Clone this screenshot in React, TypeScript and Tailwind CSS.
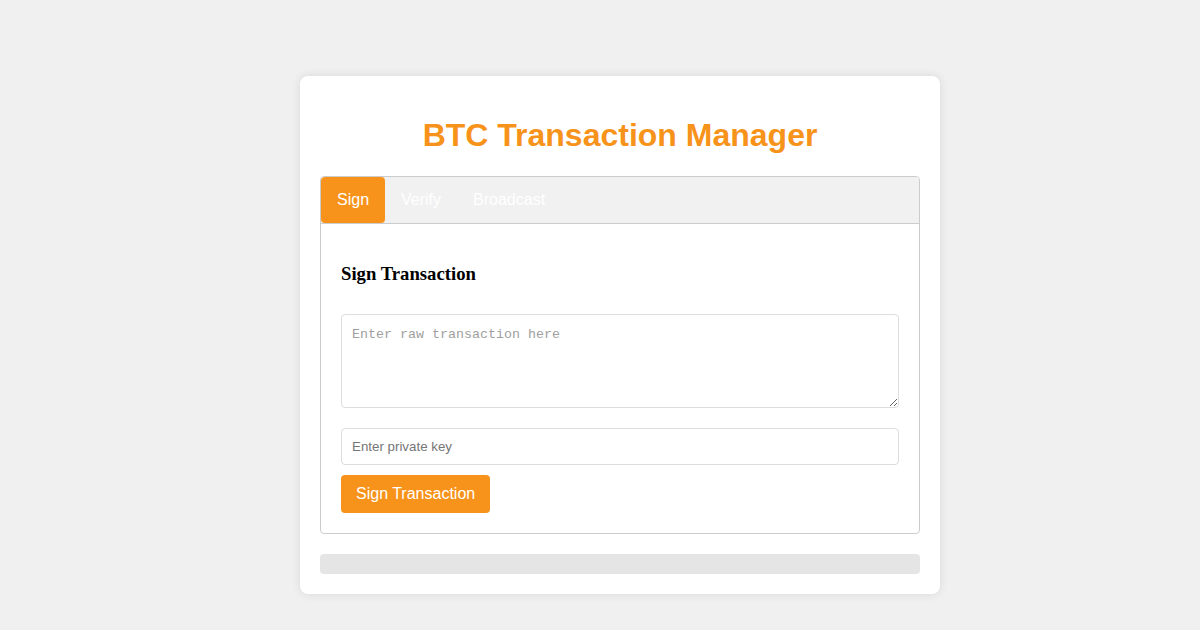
import React, { useState } from "react";

const tabs = ["Sign", "Verify", "Broadcast"];

export default function App() {
  const [active, setActive] = useState("Sign");
  return (
    <div className="min-h-[630px] w-full bg-[#f0f0f0] flex justify-center pl-[40px] pt-[76px] font-['Liberation_Sans',Arial,sans-serif]">
      <div className="w-[640px] h-[518px] bg-white rounded-[8px] shadow-[0_0_10px_rgba(0,0,0,0.1)] p-5 flex flex-col">
        <h1 className="text-[32px] leading-[37px] font-bold text-[#f7931a] text-center mt-[21px] mb-[22px]">
          BTC Transaction Manager
        </h1>
        <div className="border border-[#ccc] rounded-[4px] overflow-hidden">
          <div className="flex bg-[#f1f1f1] border-b border-[#ccc] h-[47px]">
            {tabs.map((t) => (
              <button
                key={t}
                onClick={() => setActive(t)}
                className={
                  t === active
                    ? "px-4 text-[16px] leading-[18px] text-white bg-[#f7931a] rounded-[4px]"
                    : "px-4 text-[16px] leading-[18px] text-white bg-transparent"
                }
              >
                {t}
              </button>
            ))}
          </div>
          <div className="p-5 flex flex-col">
            <h3 className="font-['Liberation_Serif','Times_New_Roman',serif] font-bold text-[18.72px] leading-[22px] text-black mt-[19px] mb-[29px]">
              Sign Transaction
            </h3>
            <textarea
              placeholder="Enter raw transaction here"
              className="w-full h-[94px] border border-[#ddd] rounded-[4px] px-[10px] pt-[12px] pb-[8px] font-['Liberation_Mono','Courier_New',monospace] text-[13.33px] leading-[15px] placeholder:text-[#a0a0a0] outline-none"
            />
            <input
              placeholder="Enter private key"
              className="w-full h-[37px] mt-[20px] border border-[#ddd] rounded-[4px] px-[10px] text-[13.33px] placeholder:text-[#767676] outline-none"
            />
            <div className="mt-[10px]">
              <button className="bg-[#f7931a] text-white text-[16px] leading-[18px] px-[15px] h-[38px] rounded-[4px]">
                Sign Transaction
              </button>
            </div>
          </div>
        </div>
        <div className="mt-5 h-5 bg-[#e5e5e5] rounded-[4px]" />
      </div>
    </div>
  );
}
